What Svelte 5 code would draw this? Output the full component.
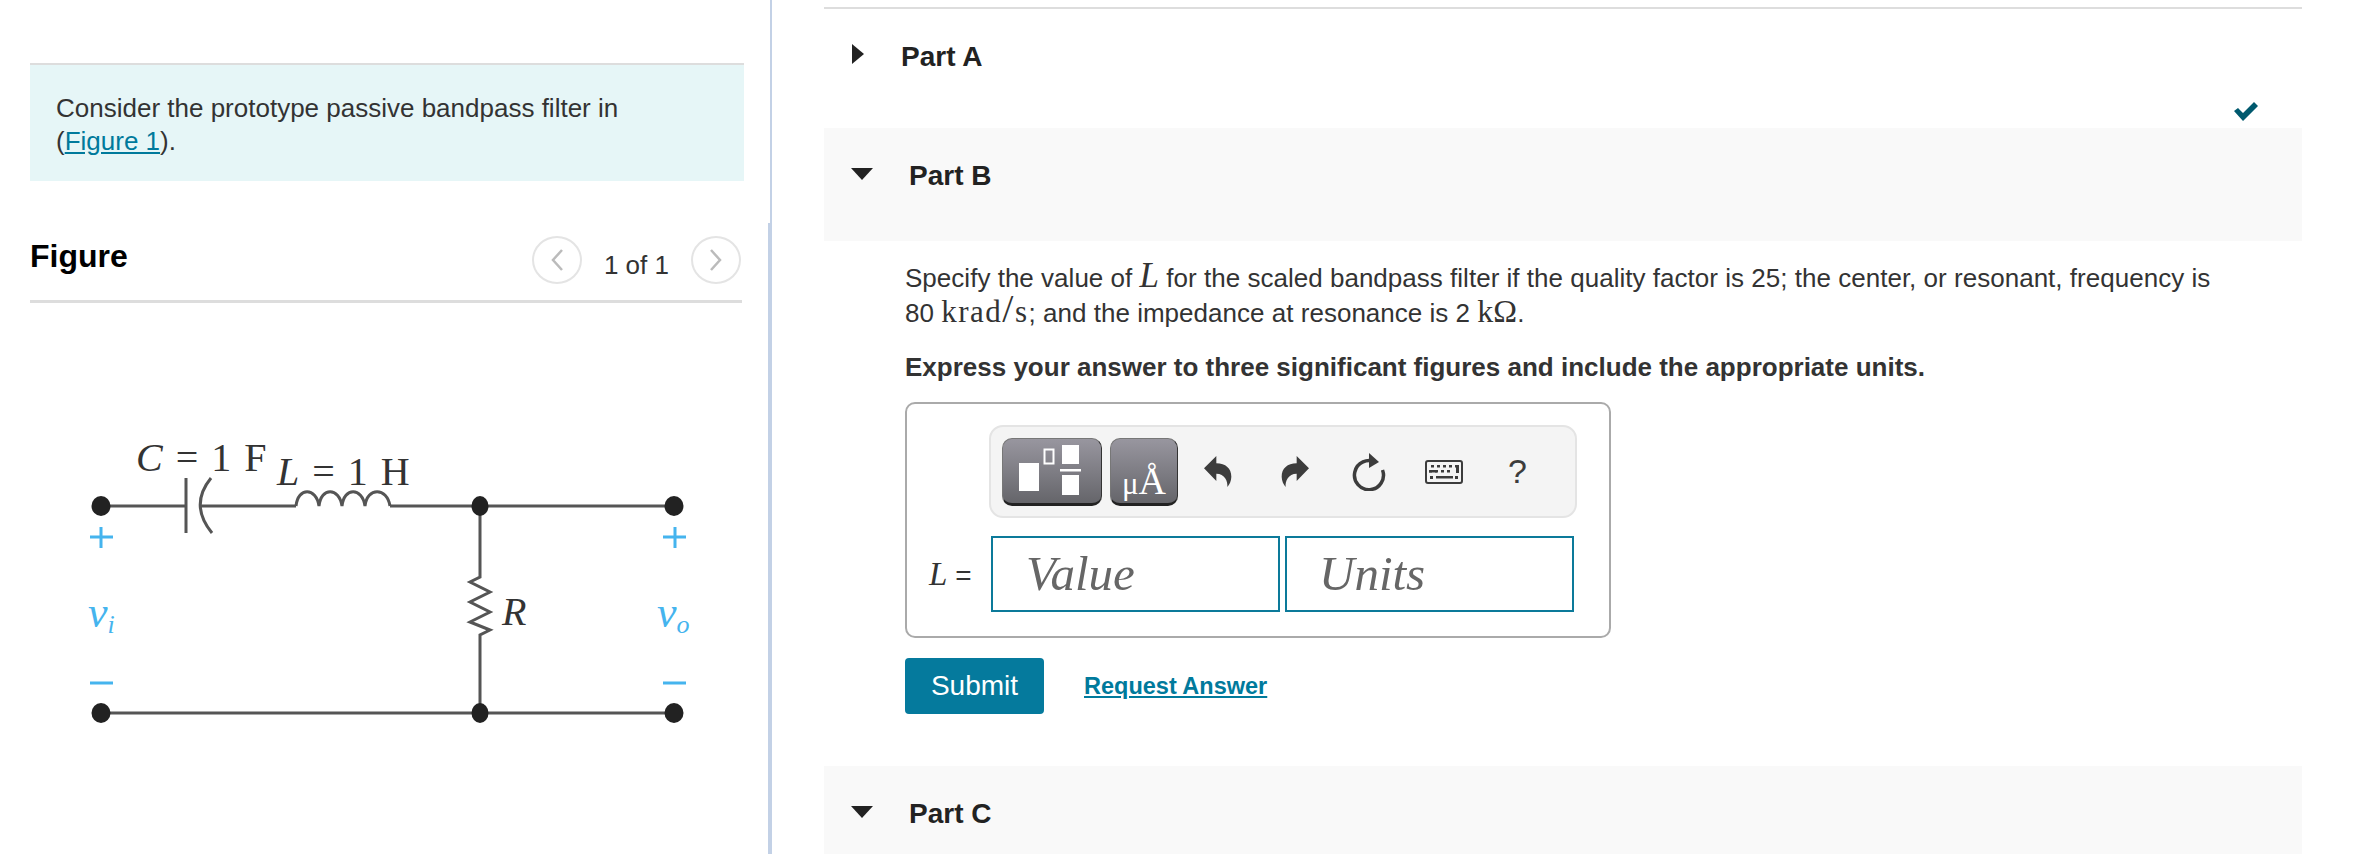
<script>
  const zigzag = 'M480 506V577L470 582L490 592L470 602L490 612L470 622L490 630L480 635V713';
  const keyRows = [
    [7, 13, 19, 25, 31],
    [5, 11, 17, 23],
  ];
</script>

<div class="page">
  <section class="left">
    <div class="intro">
      <p>Consider the prototype passive bandpass filter in<br />(<a href="#fig">Figure 1</a>).</p>
    </div>
    <header class="figure-head">
      <h2>Figure</h2>
      <div class="pager">
        <span class="circle"><svg width="14" height="24" viewBox="0 0 14 24"><path d="M12 2L3 12L12 22" /></svg></span>
        <span class="count">1 of 1</span>
        <span class="circle"><svg width="14" height="24" viewBox="0 0 14 24"><path d="M2 2L11 12L2 22" /></svg></span>
      </div>
    </header>
    <svg class="circuit" width="768" height="551" viewBox="0 303 768 551">
      <g class="wire">
        <path d="M101 506H186M186 478V533" />
        <path d="M211 478Q189 505 212 533" />
        <path d="M200 506H296" />
        <path d="M296 506C298 487 316 487 319 506C321 487 339 487 342 506C344 487 362 487 365 506C367 487 387 487 390 506" />
        <path d="M390 506H674" />
        <path d={zigzag} />
        <path d="M101 713H674" />
      </g>
      <g class="dots">
        <ellipse cx="101" cy="506" rx="9.5" ry="10" />
        <ellipse cx="480" cy="506" rx="8.5" ry="10" />
        <ellipse cx="674" cy="506" rx="9.5" ry="10" />
        <ellipse cx="101" cy="713" rx="9.5" ry="10" />
        <ellipse cx="480" cy="713" rx="8.5" ry="10" />
        <ellipse cx="674" cy="713" rx="9.5" ry="10" />
      </g>
      <g class="blue-lines">
        <path d="M90 537H113M101 527V548M90 683H113" />
        <path d="M663 537H686M675 527V548M663 683H686" />
      </g>
      <text class="lbl" x="136" y="471"><tspan class="it">C</tspan> = 1 F</text>
      <text class="lbl" x="277" y="485"><tspan class="it">L</tspan> = 1 H</text>
      <text class="lbl it" x="502" y="625">R</text>
      <text class="lbl it blue vee" x="88" y="627">v<tspan class="sub" dy="6">i</tspan></text>
      <text class="lbl it blue vee" x="657" y="627">v<tspan class="sub" dy="6">o</tspan></text>
    </svg>
  </section>

  <div class="rule">
    <div class="rule-top"></div>
    <div class="rule-bottom"></div>
  </div>

  <main class="right">
    <div class="part part-a">
      <span class="tri-right"></span>
      <h3>Part A</h3>
      <svg class="check" width="24" height="19" viewBox="0 0 24 19"><path d="M0 9L4 6L9 11L20 0L24 4L9 19Z" /></svg>
    </div>

    <div class="part part-open">
      <span class="tri-down"></span>
      <h3>Part B</h3>
    </div>

    <div class="body">
      <p class="question">
        Specify the value of <span class="math it big">L</span> for the scaled bandpass filter if the quality factor is 25; the center, or resonant, frequency is<br />
        80 <span class="math wide">krad<span class="slash">/</span>s</span>; and the impedance at resonance is 2 <span class="math">kΩ</span>.
      </p>
      <p class="instruct">Express your answer to three significant figures and include the appropriate units.</p>

      <div class="answer">
        <div class="toolbar">
          <button class="tool tool-wide" aria-label="Templates">
            <svg width="62" height="52" viewBox="0 0 62 52">
              <rect x="0" y="18" width="20" height="28" fill="#fff" />
              <rect x="25.500" y="4.500" width="9" height="14" fill="none" stroke="#fff" stroke-width="2" />
              <rect x="43" y="0" width="17" height="19" fill="#fff" />
              <rect x="41" y="24" width="21" height="2.500" fill="#fff" />
              <rect x="43" y="30" width="17" height="20" fill="#fff" />
            </svg>
          </button>
          <button class="tool tool-unit"><span class="mu">μ</span><span class="ang">Å</span></button>
          <svg class="act undo" width="28" height="32" viewBox="0 0 84 96"><path d="M0 37L37 0V22C65 22 82 38 82 62C82 75 76 86 70 93C72 75 62 53 37 53V75Z" /></svg>
          <svg class="act redo" width="28" height="32" viewBox="0 0 84 96"><path d="M84 37L47 0V22C19 22 2 38 2 62C2 75 8 86 14 93C12 75 22 53 47 53V75Z" /></svg>
          <svg class="act reload" width="34" height="38" viewBox="0 0 34 38">
            <path class="ring" d="M24 9.500A14.500 14.500 0 1 0 30.500 17" />
            <path d="M17 0L27 9L17 15Z" />
          </svg>
          <svg class="act keyboard" width="38" height="24" viewBox="0 0 38 24">
            <rect x="1" y="1" width="36" height="22" rx="2" fill="none" stroke="#3c3c3c" stroke-width="2" />
            {#each keyRows as row, i}
              {#each row as x}
                <rect x={x - 1} y={5 + i * 5} width="3" height="2.500" fill="#3c3c3c" />
              {/each}
            {/each}
            <rect x="4" y="10" width="8" height="2.500" fill="#3c3c3c" />
            <rect x="31" y="5" width="3" height="8" fill="#3c3c3c" />
            <rect x="5" y="16" width="3" height="3" fill="#3c3c3c" />
            <rect x="11" y="16" width="17" height="2.500" fill="#3c3c3c" />
            <rect x="30" y="16" width="3" height="3" fill="#3c3c3c" />
          </svg>
          <span class="help">?</span>
        </div>
        <div class="entry">
          <span class="var"><span class="it">L</span> =</span>
          <div class="field">Value</div>
          <div class="field units">Units</div>
        </div>
      </div>

      <div class="actions">
        <button class="submit">Submit</button>
        <a class="request" href="#answer">Request Answer</a>
      </div>
    </div>

    <div class="part part-open part-c">
      <span class="tri-down"></span>
      <h3>Part C</h3>
    </div>
  </main>
</div>

<style>
  :global(body) {
    margin: 0;
    background: #fff;
    overflow: hidden;
  }

  .page {
    display: flex;
    width: 2358px;
    height: 854px;
    overflow: hidden;
    font-family: "Liberation Sans", Arial, sans-serif;
    font-size: 26px;
    color: #333;
  }

  p, h2, h3 {
    margin: 0;
  }

  a {
    color: #007a9c;
  }

  .it {
    font-family: "Liberation Serif", serif;
    font-style: italic;
  }

  /* left column */
  .left {
    width: 768px;
    flex: none;
  }

  .intro {
    box-sizing: border-box;
    width: 714px;
    height: 118px;
    margin: 63px 0 0 30px;
    padding: 27px 26px 0;
    background: #e6f6f7;
    border-top: 2px solid #ddd;
    line-height: 32.500px;
  }

  .figure-head {
    display: flex;
    align-items: flex-start;
    justify-content: space-between;
    box-sizing: border-box;
    width: 712px;
    height: 122px;
    margin-left: 30px;
    border-bottom: 3px solid #ddd;
  }

  h2 {
    margin-top: 55px;
    font-size: 32px;
    line-height: 40px;
    color: #000;
  }

  .pager {
    display: flex;
    align-items: center;
    gap: 22px;
    margin-top: 55px;
    margin-right: 1px;
  }

  .circle {
    display: flex;
    align-items: center;
    justify-content: center;
    box-sizing: border-box;
    width: 50px;
    height: 48px;
    border: 2px solid #e4e4e4;
    border-radius: 50%;
  }

  .circle svg path {
    fill: none;
    stroke: #bbb;
    stroke-width: 2.500;
  }

  .count {
    padding-top: 10px;
    font-size: 26px;
  }

  .circuit {
    display: block;
  }

  .wire path {
    fill: none;
    stroke: #555;
    stroke-width: 3;
  }

  .dots ellipse {
    fill: #222;
  }

  .blue-lines path {
    fill: none;
    stroke: #45b4ee;
    stroke-width: 3;
  }

  .lbl {
    font-family: "Liberation Serif", serif;
    font-size: 40px;
    word-spacing: 3px;
    fill: #333;
  }

  .blue {
    fill: #45b4ee;
  }

  .vee {
    font-size: 44px;
  }

  .sub {
    font-size: 26px;
  }

  /* divider */
  .rule {
    display: flex;
    flex-direction: column;
    flex: none;
    width: 5px;
  }

  .rule-top {
    width: 2px;
    height: 223px;
    margin-left: 2px;
    background: #c3d1e6;
  }

  .rule-bottom {
    flex: 1;
    width: 4px;
    background: #c3d1e6;
  }

  /* right column */
  .right {
    flex: none;
    box-sizing: border-box;
    width: 1478px;
    margin-left: 51px;
    margin-top: 7px;
    border-top: 2px solid #ddd;
    height: 900px;
    align-self: flex-start;
  }

  .part {
    position: relative;
    display: flex;
    align-items: flex-start;
    box-sizing: border-box;
  }

  h3 {
    font-size: 28px;
    line-height: 32px;
    color: #222;
  }

  .part-a {
    height: 119px;
    padding: 32px 0 0 28px;
  }

  .part-a h3 {
    margin-left: 37px;
  }

  .part-open {
    height: 113px;
    padding: 32px 0 0 27px;
    background: #f9f9f9;
  }

  .part-open h3 {
    margin-left: 36px;
  }

  .part-c {
    height: 120px;
  }

  .tri-right {
    width: 0;
    height: 0;
    margin-top: 3px;
    border-left: 12px solid #222;
    border-top: 10px solid transparent;
    border-bottom: 10px solid transparent;
  }

  .tri-down {
    width: 0;
    height: 0;
    margin-top: 8px;
    border-top: 12px solid #222;
    border-left: 11px solid transparent;
    border-right: 11px solid transparent;
  }

  .check {
    position: absolute;
    left: 1410px;
    top: 93px;
  }

  .check path {
    fill: #00596e;
  }

  .body {
    padding: 20px 0 0 81px;
  }

  .question {
    line-height: 32px;
    letter-spacing: 0.020px;
  }

  .math {
    font-family: "Liberation Serif", serif;
    font-size: 32px;
    line-height: 30px;
  }

  .math.wide {
    font-size: 31px;
    letter-spacing: 1.500px;
  }

  .slash {
    font-size: 40px;
    line-height: 30px;
    font-weight: 400;
  }

  .math.big {
    font-size: 35px;
    line-height: 30px;
  }

  .instruct {
    margin-top: 22px;
    line-height: 33px;
    font-weight: 700;
  }

  .answer {
    box-sizing: border-box;
    width: 706px;
    height: 236px;
    margin-top: 18px;
    padding: 21px 0 0 82px;
    border: 2px solid #aaa;
    border-radius: 10px;
  }

  .toolbar {
    display: flex;
    align-items: center;
    box-sizing: border-box;
    width: 588px;
    height: 93px;
    padding-left: 11px;
    background: #f4f4f4;
    border: 2px solid #e4e4e4;
    border-radius: 14px;
  }

  .tool {
    display: flex;
    align-items: center;
    justify-content: center;
    box-sizing: border-box;
    height: 68px;
    padding: 0;
    border: 1px solid #777;
    border-bottom: 3px solid #222;
    border-right-color: #333;
    border-radius: 10px;
    background: linear-gradient(#98969f, #65656a);
  }

  .tool-wide {
    width: 100px;
    padding-right: 5px;
  }

  .tool-unit {
    width: 68px;
    margin-left: 8px;
    font-family: "Liberation Serif", serif;
    color: #fff;
    align-items: baseline;
    padding-top: 20px;
  }

  .mu {
    font-size: 31px;
  }

  .ang {
    font-size: 38px;
  }

  .act path {
    fill: #3c3c3c;
  }

  .reload .ring {
    fill: none;
    stroke: #3c3c3c;
    stroke-width: 3.500;
  }

  .undo {
    margin-left: 26px;
  }

  .redo {
    margin-left: 49px;
  }

  .reload {
    margin-left: 43px;
  }

  .keyboard {
    margin-left: 39px;
  }

  .help {
    margin-left: 45px;
    font-size: 34px;
    color: #3c3c3c;
  }

  .entry {
    display: flex;
    align-items: flex-start;
    gap: 5px;
    margin-top: 18px;
    margin-left: -60px;
  }

  .var {
    width: 57px;
    padding-top: 20px;
    font-size: 28px;
    line-height: 36px;
    white-space: nowrap;
  }

  .var .it {
    font-size: 33px;
  }

  .field {
    box-sizing: border-box;
    width: 289px;
    height: 76px;
    padding: 9px 0 0 33px;
    border: 2px solid #0c7a9a;
    font-family: "Liberation Serif", serif;
    font-style: italic;
    font-size: 49px;
    line-height: 54px;
    color: #666;
  }

  .units {
    padding-left: 32px;
  }

  .actions {
    display: flex;
    align-items: center;
    gap: 40px;
    margin: 20px 0 52px;
  }

  .submit {
    width: 139px;
    height: 56px;
    padding: 0;
    border: 0;
    border-radius: 4px;
    background: #057a9d;
    color: #fff;
    font-family: "Liberation Sans", Arial, sans-serif;
    font-size: 28px;
  }

  .request {
    font-size: 23.500px;
    font-weight: 700;
  }
</style>
